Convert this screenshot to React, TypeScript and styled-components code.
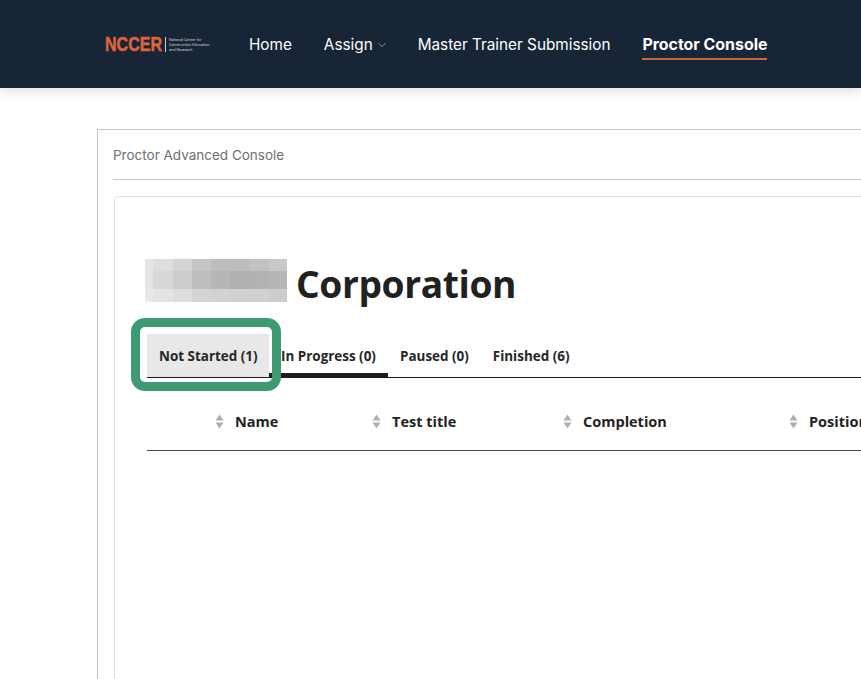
import React from "react";
import styled, { createGlobalStyle } from "styled-components";

const Global = createGlobalStyle`
  html, body { margin: 0; padding: 0; background: #fff; overflow: hidden; height: 679px; }
  body { font-family: Inter, "Liberation Sans", sans-serif; }
`;

const Page = styled.div`
  width: 861px;
  height: 679px;
  overflow: hidden;
`;

const Header = styled.header`
  height: 88px;
  background: #172536;
  display: flex;
  align-items: center;
  padding-left: 105px;
  box-shadow: 0 2px 12px rgba(0, 0, 0, 0.16);
  box-sizing: border-box;
`;

const Logo = styled.div`
  width: 104px;
  margin-right: 40px;
  display: flex;
  align-items: center;
  gap: 3px;
`;

const LogoText = styled.span`
  border-left: 1px solid #c9cdd2;
  padding-left: 3px;
  font-size: 3.65px;
  line-height: 5px;
  color: #d8dbdf;
  white-space: nowrap;
`;

const Nav = styled.nav`
  display: flex;
  align-items: center;
  gap: 32px;
`;

const NavItem = styled.a<{ $active?: boolean }>`
  display: flex;
  align-items: center;
  gap: 5px;
  color: #fff;
  font-size: ${(p) => (p.$active ? "15.9px" : "15.3px")};
  line-height: 24px;
  font-weight: ${(p) => (p.$active ? 700 : 400)};
  padding: 4px 0 1px;
  border-bottom: 2px solid ${(p) => (p.$active ? "#c26c3a" : "transparent")};
  white-space: nowrap;
`;

const Panel = styled.section`
  margin: 41px 0 0 97px;
  width: 900px;
  height: 700px;
  box-sizing: border-box;
  border: 1px solid #c4c4c4;
  padding: 0 15px;
`;

const PanelTitle = styled.div`
  height: 50px;
  display: flex;
  align-items: center;
  font-size: 13.5px;
  color: #6b6f73;
  border-bottom: 1px solid #c8c8c8;
  box-sizing: border-box;
`;

const Card = styled.div`
  margin: 16px 0 0 1px;
  height: 600px;
  box-sizing: border-box;
  border: 1px solid #e2e2e2;
  border-radius: 4px;
  padding: 62px 0 0 30px;
  position: relative;
`;

const Heading = styled.h1`
  margin: 0;
  display: flex;
  align-items: center;
  gap: 9px;
  height: 43px;
  font-family: "Open Sans", "Noto Sans", sans-serif;
  font-weight: 700;
  font-size: 37.2px;
  letter-spacing: -0.4px;
  color: #212121;
`;

const HeadingText = styled.span`
  margin-top: 6px;
`;

const Tabs = styled.div`
  margin: 32px 0 0 2px;
  display: flex;
  height: 44px;
  box-sizing: border-box;
  border-bottom: 1px solid #1c1c1c;
`;

const Tab = styled.div<{ $state?: "selected" | "focus" }>`
  height: 43px;
  box-sizing: border-box;
  padding: 0 12px;
  flex: none;
  width: ${(p) => (p.$state === "selected" ? "122px" : p.$state === "focus" ? "119px" : "auto")};
  display: flex;
  align-items: center;
  font-family: "Open Sans", "Noto Sans", sans-serif;
  font-size: 13.45px;
  font-weight: 700;
  color: #262626;
  white-space: nowrap;
  background: ${(p) => (p.$state === "selected" ? "#e8e8e8" : "transparent")};
  border-bottom: ${(p) => (p.$state === "focus" ? "4px solid #1c1c1c" : "none")};
  padding-top: ${(p) => (p.$state === "focus" ? "4px" : "0")};
`;

const TableHead = styled.div`
  margin: 0 0 0 2px;
  height: 73px;
  box-sizing: border-box;
  padding-top: 14px;
  border-bottom: 1px solid #4a4a4a;
  display: flex;
  align-items: center;
  white-space: nowrap;
`;

const Column = styled.div<{ $width: number; $inset?: number }>`
  flex: 0 0 ${(p) => p.$width}px;
  padding-left: ${(p) => p.$inset ?? 0}px;
  display: flex;
  align-items: center;
  gap: 11px;
  box-sizing: border-box;
`;

const ColumnLabel = styled.span`
  font-family: "Open Sans", "Noto Sans", sans-serif;
  font-size: 14.5px;
  font-weight: 700;
  color: #222;
`;

const Highlight = styled.div`
  position: absolute;
  left: 16px;
  top: 121px;
  width: 150px;
  height: 73px;
  box-sizing: border-box;
  border: 9px solid #3d9a73;
  border-radius: 14px;
  pointer-events: none;
`;

const Pixels = () => {
  const cols = [8, 20, 19, 19, 19, 20, 19, 18];
  const rows = [
    ["#e6e6e6", "#dedede", "#d4d4d4", "#c6c6c6", "#bdbdbd", "#bdbdbd", "#c2c2c2", "#c8c8c8"],
    ["#e4e4e4", "#d8d8d8", "#cccccc", "#bdbdbd", "#b6b6b6", "#b0b0b0", "#b2b2b2", "#b6b6b6"],
    ["#e8e8e8", "#e4e4e4", "#dedede", "#d4d4d4", "#d2d2d2", "#d0d0d0", "#d0d0d0", "#cdcdcd"],
  ];
  const heights = [12, 18, 13];
  let y = 0;
  return (
    <svg width="142" height="43" viewBox="0 0 142 43" aria-hidden="true" style={{ flex: "none" }}>
      {rows.map((r, i) => {
        const top = y;
        y += heights[i];
        let x = 0;
        return r.map((c, j) => {
          const left = x;
          x += cols[j];
          return <rect key={`${i}-${j}`} x={left} y={top} width={cols[j]} height={heights[i]} fill={c} />;
        });
      })}
    </svg>
  );
};

const NccerMark = () => (
  <svg width="57" height="16" viewBox="0 0 57 16" aria-label="NCCER" style={{ flex: "none" }}>
    <text
      x="0"
      y="14.5"
      textLength="57"
      lengthAdjust="spacingAndGlyphs"
      fontFamily="'Liberation Sans', sans-serif"
      fontWeight="700"
      fontSize="20"
      fill="#dd643a"
      stroke="#dd643a"
      strokeWidth="0.5"
    >
      NCCER
    </text>
  </svg>
);

const SortIcon = () => (
  <svg width="9" height="15" viewBox="0 0 9 15" aria-hidden="true" style={{ flex: "none" }}>
    <path d="M4.5 0.5 L8.5 6.5 L0.5 6.5 Z" fill="#aeaeae" />
    <path d="M4.5 14.5 L8.5 8.5 L0.5 8.5 Z" fill="#aeaeae" />
  </svg>
);

const Chevron = () => (
  <svg width="8" height="6" viewBox="0 0 8 6" aria-hidden="true">
    <path d="M0.3 1 L4 4.7 L7.7 1" fill="none" stroke="#8d96a0" strokeWidth="0.9" />
  </svg>
);

export default function App() {
  return (
    <Page>
      <Global />
      <Header>
        <Logo>
          <NccerMark />
          <LogoText>
            National Center for
            <br />
            Construction Education
            <br />
            and Research
          </LogoText>
        </Logo>
        <Nav>
          <NavItem>Home</NavItem>
          <NavItem>
            Assign <Chevron />
          </NavItem>
          <NavItem>Master Trainer Submission</NavItem>
          <NavItem $active>Proctor Console</NavItem>
        </Nav>
      </Header>
      <Panel>
        <PanelTitle>Proctor Advanced Console</PanelTitle>
        <Card>
          <Heading>
            <Pixels />
            <HeadingText>Corporation</HeadingText>
          </Heading>
          <Tabs>
            <Tab $state="selected">Not Started (1)</Tab>
            <Tab $state="focus">In Progress (0)</Tab>
            <Tab>Paused (0)</Tab>
            <Tab>Finished (6)</Tab>
          </Tabs>
          <TableHead>
            <Column $width={225} $inset={68}>
              <SortIcon />
              <ColumnLabel>Name</ColumnLabel>
            </Column>
            <Column $width={191}>
              <SortIcon />
              <ColumnLabel>Test title</ColumnLabel>
            </Column>
            <Column $width={226}>
              <SortIcon />
              <ColumnLabel>Completion</ColumnLabel>
            </Column>
            <Column $width={120}>
              <SortIcon />
              <ColumnLabel>Position</ColumnLabel>
            </Column>
          </TableHead>
          <Highlight />
        </Card>
      </Panel>
    </Page>
  );
}
